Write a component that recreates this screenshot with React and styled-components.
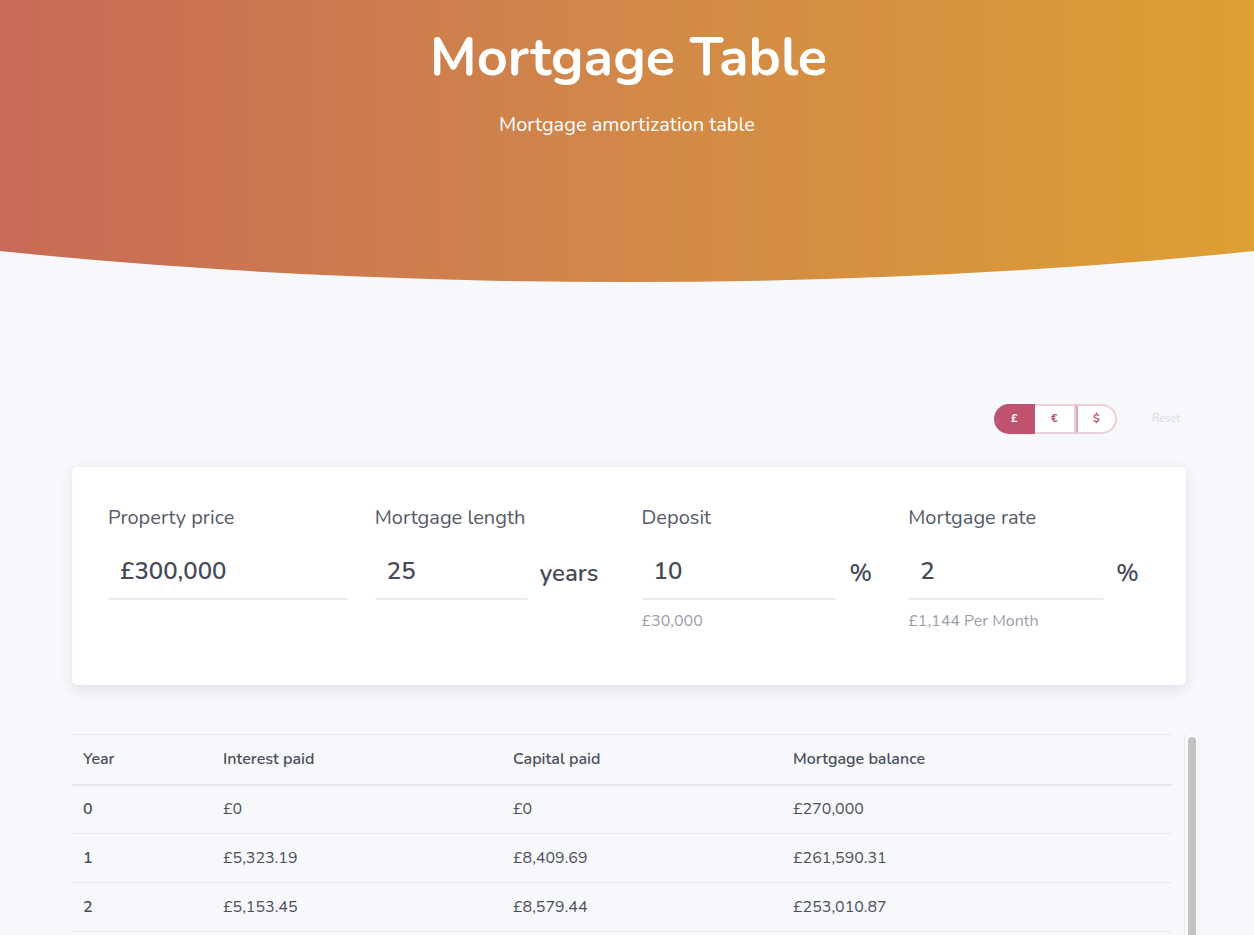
import React, { useState } from "react"
import styled, { createGlobalStyle } from "styled-components"

const GlobalStyle = createGlobalStyle`
  * { box-sizing: border-box; }
  body {
    margin: 0;
    background: #f7f8fc;
    font-family: "Nunito", "Lato", "Open Sans", sans-serif;
    color: #4b4f5c;
  }
`

const Hero = styled.header`
  height: 282px;
  background: linear-gradient(90deg, #c76a57 0%, #d18849 50%, #df9f33 100%);
  clip-path: ellipse(1375px 282px at 50% 0);
  display: flex;
  flex-direction: column;
  align-items: center;
  color: white;
`

const Title = styled.h1`
  margin: 22px 0 0 3px;
  font-size: 54px;
  font-weight: 700;
  line-height: 70px;
`

const Subtitle = styled.p`
  margin: 21px 0 0 0;
  font-size: 20px;
  line-height: 24px;
`

const Main = styled.main`
  padding: 122px 68px 0 72px;
`

const Toolbar = styled.div`
  display: flex;
  justify-content: flex-end;
  align-items: center;
  gap: 29px;
  height: 29px;
`

const Toggle = styled.div`
  display: flex;
  height: 30px;
`

const CurrencyButton = styled.button`
  width: 41px;
  height: 30px;
  border: 2px solid #ecd0d9;
  border-left-width: ${({ $first }) => ($first ? "2px" : "0")};
  background: ${({ $active }) => ($active ? "#bf5370" : "white")};
  border-color: ${({ $active }) => ($active ? "#bf5370" : "#ecd0d9")};
  color: ${({ $active }) => ($active ? "white" : "#c0506f")};
  font-family: inherit;
  font-size: 11px;
  font-weight: 700;
  padding: 0;
  cursor: pointer;
  &:first-child {
    border-radius: 15px 0 0 15px;
  }
  &:last-child {
    border-radius: 0 15px 15px 0;
    border-left: 2px solid #dcaabb;
  }
`

const ResetButton = styled.button`
  border: none;
  background: transparent;
  color: #d9dbe2;
  font-family: inherit;
  font-size: 11px;
  padding: 0 6px;
  cursor: pointer;
`

const Card = styled.section`
  margin-top: 34px;
  background: white;
  border-radius: 5px;
  box-shadow: 0 4px 14px rgba(30, 35, 60, 0.1), 0 0 1px rgba(30, 35, 60, 0.12);
  padding: 39px 36px 54px 36px;
  display: grid;
  grid-template-columns: repeat(4, 1fr);
  gap: 25px;
  width: 1114px;
`

const Field = styled.div`
  display: flex;
  flex-direction: column;
`

const Label = styled.label`
  font-size: 20px;
  color: #555a68;
  line-height: 24px;
`

const InputRow = styled.div`
  display: flex;
  align-items: center;
  margin-top: 14px;
`

const Input = styled.input`
  width: ${({ $width }) => $width};
  height: 56px;
  border: none;
  border-bottom: 2px solid #eaebf0;
  border-radius: 2px;
  padding: 0 12px;
  font-family: inherit;
  font-size: 24px;
  font-weight: 600;
  color: #464a56;
  background: white;
  outline: none;
`

const Unit = styled.span`
  margin-left: ${({ $gap }) => $gap};
  font-size: 24px;
  font-weight: 600;
  color: #464a56;
  padding-top: 2px;
`

const Hint = styled.div`
  margin-top: 11px;
  font-size: 16px;
  color: #9c9ea8;
  line-height: 20px;
`

const TableArea = styled.div`
  margin-top: 49px;
  display: flex;
  align-items: flex-start;
  gap: 12px;
  width: 1127px;
  height: 201px;
  overflow: hidden;
`

const TableClip = styled.div`
  width: 1100px;
  height: 100%;
  overflow: hidden;
`

const ScrollTrack = styled.div`
  width: 15px;
  height: 100%;
  border-left: 1px solid #e9eaef;
  border-right: 1px solid #eceef2;
  background: #f7f8fc;
  padding: 3px 2px 0 3px;
`

const ScrollThumb = styled.div`
  height: 400px;
  background: #c2c2c2;
  border-radius: 5px 5px 0 0;
`

const Table = styled.table`
  width: 1100px;
  border-collapse: collapse;
  font-size: 16px;
  color: #4b4f5c;
`

const Th = styled.th`
  text-align: left;
  font-weight: 600;
  padding: 0 11px;
  height: 50px;
  border-top: 1px solid #e8e9ee;
  border-bottom: 2px solid #e6e7ec;
  width: ${({ $w }) => $w};
`

const Td = styled.td`
  padding: 0 11px;
  height: 49px;
  border-bottom: 1px solid #e8e9ee;
  font-weight: ${({ $bold }) => ($bold ? 600 : 400)};
`

const rows = [
  ["0", "£0", "£0", "£270,000"],
  ["1", "£5,323.19", "£8,409.69", "£261,590.31"],
  ["2", "£5,153.45", "£8,579.44", "£253,010.87"],
]

export default function App() {
  const [currency, setCurrency] = useState("£")
  return (
    <>
      <GlobalStyle />
      <Hero>
        <Title>Mortgage Table</Title>
        <Subtitle>Mortgage amortization table</Subtitle>
      </Hero>
      <Main>
        <Toolbar>
          <Toggle>
            {["£", "€", "$"].map((c, i) => (
              <CurrencyButton
                key={c}
                $first={i === 0}
                $active={currency === c}
                onClick={() => setCurrency(c)}
              >
                {c}
              </CurrencyButton>
            ))}
          </Toggle>
          <ResetButton>Reset</ResetButton>
        </Toolbar>
        <Card>
          <Field>
            <Label>Property price</Label>
            <InputRow>
              <Input $width="241px" defaultValue="£300,000" />
            </InputRow>
          </Field>
          <Field>
            <Label>Mortgage length</Label>
            <InputRow>
              <Input $width="153px" defaultValue="25" />
              <Unit $gap="12px">years</Unit>
            </InputRow>
          </Field>
          <Field>
            <Label>Deposit</Label>
            <InputRow>
              <Input $width="195px" defaultValue="10" />
              <Unit $gap="13px">%</Unit>
            </InputRow>
            <Hint>£30,000</Hint>
          </Field>
          <Field>
            <Label>Mortgage rate</Label>
            <InputRow>
              <Input $width="196px" defaultValue="2" />
              <Unit $gap="12px">%</Unit>
            </InputRow>
            <Hint>£1,144 Per Month</Hint>
          </Field>
        </Card>
        <TableArea>
          <TableClip>
            <Table>
              <thead>
                <tr>
                  <Th $w="140px">Year</Th>
                  <Th $w="290px">Interest paid</Th>
                  <Th $w="280px">Capital paid</Th>
                  <Th>Mortgage balance</Th>
                </tr>
              </thead>
              <tbody>
                {rows.map((r) => (
                  <tr key={r[0]}>
                    <Td $bold>{r[0]}</Td>
                    <Td>{r[1]}</Td>
                    <Td>{r[2]}</Td>
                    <Td>{r[3]}</Td>
                  </tr>
                ))}
              </tbody>
            </Table>
          </TableClip>
          <ScrollTrack>
            <ScrollThumb />
          </ScrollTrack>
        </TableArea>
      </Main>
    </>
  )
}
